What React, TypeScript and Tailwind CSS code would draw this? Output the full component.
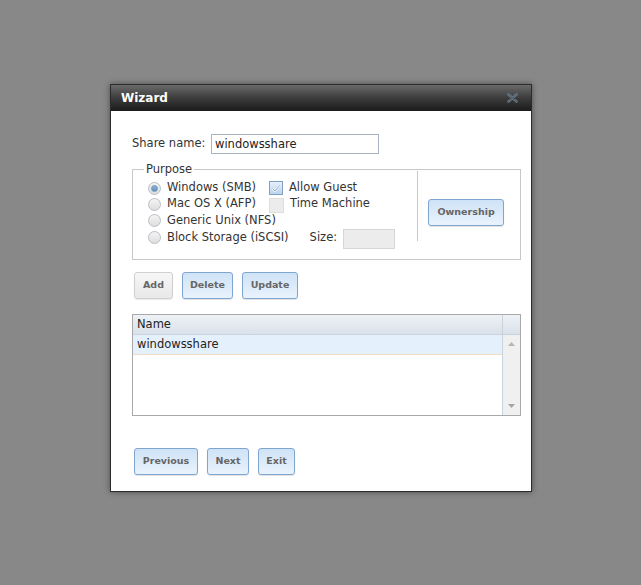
import React from "react";

const font = { fontFamily: '"DejaVu Sans", Verdana, sans-serif' };

function Radio({ checked }: { checked?: boolean }) {
  return (
    <span className="relative inline-flex h-[13px] w-[13px] shrink-0 items-center justify-center rounded-full border border-[#b9bec6] bg-gradient-to-b from-[#f4f4f4] to-[#dedede]">
      {checked && (
        <span className="h-[7px] w-[7px] rounded-full border border-[#6f97bd] bg-gradient-to-b from-[#8fb5da] to-[#5f8fc0]" />
      )}
    </span>
  );
}

function Btn({ label, w, h, gray }: { label: string; w: string; h: string; gray?: boolean }) {
  return (
    <button
      className={
        gray
          ? `${w} ${h} rounded-[3px] border border-[#d0d0d0] bg-gradient-to-b from-[#f6f6f6] to-[#e9e9e9] text-[9.5px] font-bold text-[#666] shadow-[0_1px_1px_rgba(0,0,0,0.08)]`
          : `${w} ${h} rounded-[3px] border border-[#7ea6cf] bg-gradient-to-b from-[#cfe2f6] to-[#e9f3fd] text-[9.5px] font-bold text-[#666] shadow-[0_1px_1px_rgba(0,0,0,0.12)]`
      }
      style={font}
    >
      {label}
    </button>
  );
}

export default function App() {
  return (
    <div className="h-[585px] w-[641px] bg-[#888888] pl-[110px] pt-[84px]" style={font}>
      <div className="flex h-[408px] w-[422px] flex-col border border-[#2b2b2b] bg-white shadow-[0_0_6px_rgba(0,0,0,0.45)]">
        {/* Title bar */}
        <div className="flex h-[26px] shrink-0 items-center justify-between bg-gradient-to-b from-[#6b6b6b] via-[#3c3c3c] to-[#1c1c1c] pl-[10px] pr-[13px]">
          <span className="text-[12px] font-bold text-white">Wizard</span>
          <svg width="11" height="10" viewBox="0 0 11 10" className="opacity-70">
            <path d="M1.5 1.5 L9.5 8.5 M9.5 1.5 L1.5 8.5" stroke="#7d8fa3" strokeWidth="2.6" strokeLinecap="round" />
            <path d="M1.5 1.5 L9.5 8.5 M9.5 1.5 L1.5 8.5" stroke="#56687d" strokeWidth="1" strokeLinecap="round" />
          </svg>
        </div>

        {/* Body */}
        <div className="flex flex-1 flex-col pl-[21px] pr-[10px] text-[11.5px] text-[#333]">
          {/* Share name */}
          <div className="mt-[23px] flex items-center">
            <span className="w-[79px]">Share name:</span>
            <input
              readOnly
              value="windowsshare"
              className="h-[20px] w-[168px] border border-[#aab4c4] px-[3px] text-[11.5px] text-[#222] outline-none"
              style={font}
            />
          </div>

          {/* Purpose fieldset */}
          <fieldset className="mt-[9px] h-[97px] w-[389px] border border-[#c8c8c8]">
            <legend className="ml-[11px] px-[2px] leading-[13px]">Purpose</legend>
            <div className="flex">
              <div className="flex flex-col pl-[15px] pt-[4px]">
                <div className="flex h-[16px] items-center">
                  <div className="flex w-[121px] items-center gap-[6px]">
                    <Radio checked />
                    <span>Windows (SMB)</span>
                  </div>
                  <span className="flex h-[14px] w-[14px] items-center justify-center border border-[#7f9fc4] bg-gradient-to-b from-[#e6f0fb] to-[#bcd4ee]">
                    <svg width="10" height="9" viewBox="0 0 10 9">
                      <path d="M1.5 4.5 L4 7 L8.5 1.5" fill="none" stroke="#ffffff" strokeWidth="1.8" />
                      <path d="M1.5 4.5 L4 7 L8.5 1.5" fill="none" stroke="#6d93bd" strokeWidth="0.8" />
                    </svg>
                  </span>
                  <span className="ml-[6px]">Allow Guest</span>
                </div>
                <div className="flex h-[16px] items-center">
                  <div className="flex w-[121px] items-center gap-[6px]">
                    <Radio />
                    <span>Mac OS X (AFP)</span>
                  </div>
                  <span className="mt-[2px] h-[15px] w-[15px] border border-[#dedede] bg-[#ececec]" />
                  <span className="ml-[6px]">Time Machine</span>
                </div>
                <div className="flex h-[17px] items-center">
                  <div className="flex items-center gap-[6px]">
                    <Radio />
                    <span>Generic Unix (NFS)</span>
                  </div>
                </div>
                <div className="flex h-[17px] items-center">
                  <div className="flex items-center gap-[6px]">
                    <Radio />
                    <span>Block Storage (iSCSI)</span>
                  </div>
                  <span className="ml-[21px]">Size:</span>
                  <span className="ml-[6px] mt-[2px] h-[20px] w-[52px] border border-[#d6d6d6] bg-[#ececec]" />
                </div>
              </div>
              <div className="ml-[22px] mt-[-5px] h-[70px] w-px bg-[#c8c8c8]" />
              <div className="flex items-center pl-[10px] pt-[3px]">
                <Btn label="Ownership" w="w-[76px]" h="h-[27px]" />
              </div>
            </div>
          </fieldset>

          {/* Action buttons */}
          <div className="mt-[12px] flex gap-[9px] pl-[2px]">
            <Btn label="Add" w="w-[39px]" h="h-[27px]" gray />
            <Btn label="Delete" w="w-[51px]" h="h-[27px]" />
            <Btn label="Update" w="w-[56px]" h="h-[27px]" />
          </div>

          {/* Grid */}
          <div className="mt-[15px] flex h-[102px] w-[389px] border border-[#a9a9a9]">
            <div className="flex flex-1 flex-col">
              <div className="flex h-[20px] items-center border-b border-[#c9d2dd] bg-gradient-to-b from-[#eef2f6] to-[#d9e1ea] pl-[4px] text-[#222]">
                Name
              </div>
              <div className="flex h-[20px] items-center border-b border-[#f2dcc4] bg-[#e4f1fd] pl-[4px] pt-[1px] text-[#222]">
                windowsshare
              </div>
            </div>
            <div className="flex w-[18px] flex-col border-l border-[#c9d2dd]">
              <div className="h-[20px] border-b border-[#c9d2dd] bg-gradient-to-b from-[#eef2f6] to-[#d9e1ea]" />
              <div className="flex flex-1 flex-col items-center justify-between bg-[#f0f0f0] pb-[7px] pt-[7px]">
                <svg width="7" height="4" viewBox="0 0 7 4"><path d="M0 4 L3.5 0 L7 4 Z" fill="#b5b5b5" /></svg>
                <svg width="7" height="4" viewBox="0 0 7 4"><path d="M0 0 L3.5 4 L7 0 Z" fill="#a5a5a5" /></svg>
              </div>
            </div>
          </div>

          {/* Nav buttons */}
          <div className="mt-[32px] flex gap-[9px] pl-[2px]">
            <Btn label="Previous" w="w-[64px]" h="h-[27px]" />
            <Btn label="Next" w="w-[42px]" h="h-[27px]" />
            <Btn label="Exit" w="w-[37px]" h="h-[27px]" />
          </div>
        </div>
      </div>
    </div>
  );
}
